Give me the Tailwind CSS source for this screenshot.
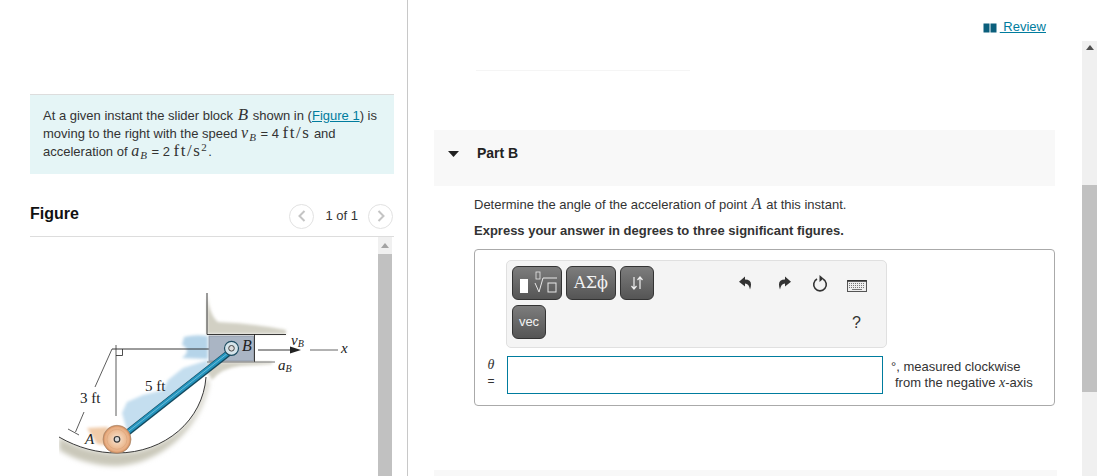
<!doctype html>
<html lang="en">

<head>
  <meta charset="UTF-8" />
  <meta name="viewport" content="width=device-width, initial-scale=1.0" />
  <title>Part B</title>
  <script src="https://cdn.jsdelivr.net/npm/@tailwindcss/browser@4"></script>
</head>

<body class="bg-white text-[#333] font-['Liberation_Sans',Arial,sans-serif] overflow-hidden">
  <div class="flex h-[476px] w-[1098px] overflow-hidden">

    <!-- left column -->
    <div class="w-[408px] shrink-0 border-r border-[#c8c8c8] pl-[30px] pr-[13px] pt-[94px]">
      <div class="h-[80px] bg-[#e5f5f6] border-t border-[#dddddd] pl-[13px] pt-[12px] text-[13px] leading-[18px] whitespace-nowrap">
        At a given instant the slider block <i class="font-['Liberation_Serif',serif] text-[17px] leading-[0] mx-[1px]">B</i> shown in (<a class="text-[#007c9e] underline">Figure 1</a>) is<br>
        moving to the right with the speed <i class="font-['Liberation_Serif',serif] text-[16px] leading-[0] tracking-[1px]">v<sub class="text-[11px]">B</sub></i> = 4 <span class="font-['Liberation_Serif',serif] text-[17px] leading-[0] tracking-[1.5px]">ft/s</span> and<br>
        acceleration of <i class="font-['Liberation_Serif',serif] text-[16px] leading-[0] tracking-[1px]">a<sub class="text-[11px]">B</sub></i> = 2 <span class="font-['Liberation_Serif',serif] text-[17px] leading-[0] tracking-[1.5px]">ft/s<sup class="text-[11px]">2</sup></span>.
      </div>

      <div class="flex items-center justify-between h-[63px] pt-[22px] border-b border-[#dddddd] pr-[1px]">
        <h2 class="text-[16px] font-bold text-[#111] -mt-[5px]">Figure</h2>
        <div class="flex items-center text-[13px]">
          <span class="w-[25px] h-[25px] rounded-full border border-[#e2e2e2] flex items-center justify-center">
            <svg width="8" height="12" viewBox="0 0 8 12"><path d="M6.5 1 L1.5 6 L6.5 11" fill="none" stroke="#c4c4c4" stroke-width="2" /></svg>
          </span>
          <span class="ml-[11px] mr-[10px]">1 of 1</span>
          <span class="w-[25px] h-[25px] rounded-full border border-[#e2e2e2] flex items-center justify-center">
            <svg width="8" height="12" viewBox="0 0 8 12"><path d="M1.5 1 L6.5 6 L1.5 11" fill="none" stroke="#c4c4c4" stroke-width="2" /></svg>
          </span>
        </div>
      </div>

      <div class="flex h-[239px]">
        <!-- figure drawing uses page coordinates shifted by the viewBox -->
        <svg class="w-[347px] h-[239px] shrink-0" viewBox="30 237 347 239">
          <defs>
            <radialGradient id="wheel">
              <stop offset="0" stop-color="#f8e6d6" />
              <stop offset="0.5" stop-color="#efc4a0" />
              <stop offset="0.85" stop-color="#e8ad82" />
              <stop offset="1" stop-color="#cc8656" />
            </radialGradient>
            <filter id="soft"><feGaussianBlur stdDeviation="1.4" /></filter>
            <filter id="softer"><feGaussianBlur stdDeviation="2.6" /></filter>
            <clipPath id="below"><path d="M59 437 C78 448 98 453 117 453 C165 453 203 420 206 377 L230 377 L230 476 L59 476 Z" /></clipPath>
          </defs>

          <!-- ground shading -->
          <g clip-path="url(#below)">
            <path d="M59 437 C78 448 98 453 117 453 C165 453 203 420 206 377 L209 383 C200 430 160 464 117 466 C95 466 75 460 59 450 Z" fill="#c9c7b9" filter="url(#softer)" />
          </g>
          <path d="M207 295 Q210 316 218 322 Q250 323 286 330 L286 334 L207 334 Z" fill="#d2d0c4" filter="url(#soft)" />
          <path d="M207 362 L272 362 L272 364 L240 366 Q222 368 212 380 L207 372 Z" fill="#d2d0c4" filter="url(#soft)" />

          <!-- blue smear -->
          <path d="M184 337 Q195 334 208 336 L208 359 L182 358 Q192 350 182 345 Z" fill="#b5d4e9" filter="url(#soft)" />
          <path d="M122 413 L127 402 L143 395 L163 390 L168 380 L183 368 L208 360 L207 370 L128 434 Z" fill="#c4deef" filter="url(#soft)" />
          <!-- orange smear -->
          <path d="M87 428 L108 427 L106 445 L97 444 Z" fill="#f0cba9" filter="url(#soft)" />

          <!-- guide lines -->
          <path d="M112 349 L220 349" stroke="#222" stroke-width="0.9" />
          <path d="M116 345 L116 416" stroke="#333" stroke-width="0.8" />
          <path d="M116 355.5 L122.5 355.5 L122.5 349" fill="none" stroke="#222" stroke-width="0.8" />
          <path d="M112 349 L95 387 M84 412 L75.5 432 M68 429 L79 435" fill="none" stroke="#333" stroke-width="0.8" />

          <!-- block and slot -->
          <rect x="209" y="336" width="44.5" height="25" fill="#aab5c4" stroke="#8d97a5" stroke-width="0.8" />
          <path d="M207 293 L207 334.5 L286 334.5 M254.5 334 L254.5 362" fill="none" stroke="#222" stroke-width="0.9" />
          <path d="M207 362 L275 362" stroke="#666" stroke-width="0.9" />

          <!-- curved track -->
          <path d="M59 437 C78 448 98 453 117 453 C165 453 203 420 206 377" fill="none" stroke="#222" stroke-width="0.9" />

          <!-- rod -->
          <path d="M122 437 L230 352" stroke="#12495f" stroke-width="6.5" />
          <path d="M122 436.4 L230 351.4" stroke="#2494bd" stroke-width="4.5" />
          <path d="M122 436.4 L230 351.4" stroke="#7fc7df" stroke-width="0.8" />

          <!-- pin B -->
          <circle cx="231.5" cy="348.3" r="7" fill="#d6e4ea" stroke="#1e4c61" stroke-width="1.2" />
          <circle cx="231.5" cy="348.3" r="2.8" fill="#dddddd" stroke="#444" stroke-width="1" />

          <!-- wheel A -->
          <circle cx="117" cy="439.3" r="14" fill="url(#wheel)" stroke="#a88a70" stroke-width="0.7" />
          <circle cx="117" cy="439.3" r="10" fill="none" stroke="#d9a47a" stroke-width="0.6" />
          <circle cx="117" cy="439.3" r="2.8" fill="#d8d8d8" stroke="#333" stroke-width="1.2" />

          <!-- velocity arrow -->
          <path d="M258 350 L292 350" stroke="#222" stroke-width="0.9" />
          <path d="M290 346.5 L301 350 L290 353.5 Z" fill="#222" />
          <path d="M310 350 L338 350" stroke="#555" stroke-width="0.9" />

          <g font-family="'Liberation Serif',serif" fill="#222" font-size="15">
            <text x="242" y="351" font-style="italic" font-size="16">B</text>
            <text x="291" y="345" font-style="italic" font-size="15">v<tspan font-size="10" dy="2">B</tspan></text>
            <text x="341" y="353" font-style="italic">x</text>
            <text x="278" y="370" font-style="italic" font-size="15">a<tspan font-size="10" dy="2">B</tspan></text>
            <text x="80" y="402.5">3 ft</text>
            <text x="145" y="390.5">5 ft</text>
            <text x="85" y="444" font-style="italic">A</text>
          </g>
        </svg>

        <!-- figure scrollbar -->
        <div class="w-[14px] ml-[1px] bg-[#f0f0f0] flex flex-col items-center">
          <div class="h-[17px] flex items-center justify-center">
            <svg width="8" height="5" viewBox="0 0 8 5"><path d="M0 5 L4 0 L8 5 Z" fill="#a3a3a3" /></svg>
          </div>
          <div class="w-full flex-1 bg-[#c1c1c1]"></div>
        </div>
      </div>
    </div>

    <!-- right column -->
    <div class="flex-1 flex flex-col min-w-0">
      <div class="h-[41px] shrink-0 flex justify-end items-start pt-[19px] pr-[52px] text-[13px] text-[#007c9e]">
        <svg class="mt-[4px] mr-[3px]" width="14" height="10" viewBox="0 0 14 10">
          <rect x="0.5" y="0.5" width="6" height="9" fill="#0b5f7c" />
          <rect x="7.5" y="0.5" width="6" height="9" fill="#0b5f7c" />
        </svg>
        <a class="underline leading-[16px]">&nbsp;Review</a>
      </div>

      <div class="flex-1 flex min-h-0">
        <div class="w-[674px] shrink-0 pl-[26px]">
          <div class="h-[1px] w-[214px] ml-[42px] mt-[29px] bg-[#f5f5f5]"></div>

          <div class="w-[621px] h-[56px] mt-[59px] bg-[#f8f8f8] flex items-center pl-[14px] pb-[9px] text-[14px] font-bold text-[#222]">
            <svg width="11" height="6" viewBox="0 0 11 6"><path d="M0 0 L11 0 L5.5 6 Z" fill="#222" /></svg>
            <span class="ml-[18px]">Part B</span>
          </div>

          <div class="ml-[40px] w-[581px]">
            <p class="mt-[10px] text-[13px] leading-[18px] whitespace-nowrap">Determine the angle of the acceleration of point <i class="font-['Liberation_Serif',serif] text-[16px] leading-[0] mx-[1px]">A</i> at this instant.</p>
            <p class="mt-[8px] text-[13px] font-bold leading-[18px]">Express your answer in degrees to three significant figures.</p>

            <div class="mt-[9px] h-[157px] border border-[#aaaaaa] rounded-[4px] pl-[31px] pt-[10px]">
              <div class="w-[381px] h-[88px] bg-[#f4f4f4] border border-[#e0e0e0] rounded-[5px] pl-[5px] pr-[20px] pt-[5px] flex flex-col gap-[5px]">
                <div class="flex items-start">
                  <div class="flex gap-[4px]">
                    <span class="w-[50px] h-[34px] rounded-[6px] border border-[#333] bg-gradient-to-b from-[#7d7d7d] to-[#555555] flex items-center justify-center">
                      <svg width="48" height="32" viewBox="0 0 48 32">
                        <rect x="7" y="12" width="8" height="14" fill="#fff" />
                        <rect x="23" y="5" width="4" height="7" fill="none" stroke="#e8e8e8" stroke-width="0.8" />
                        <path d="M22 16 L26 25 L30 11 L44 11" fill="none" stroke="#e8e8e8" stroke-width="1" />
                        <rect x="35" y="16" width="8" height="9" fill="none" stroke="#e8e8e8" stroke-width="1" />
                      </svg>
                    </span>
                    <span class="w-[50px] h-[34px] rounded-[6px] border border-[#333] bg-gradient-to-b from-[#7d7d7d] to-[#555555] flex items-center justify-center font-['DejaVu_Serif',serif] text-[16px] text-[#f2f2f2] whitespace-nowrap">ΑΣϕ</span>
                    <span class="w-[34px] h-[34px] rounded-[6px] border border-[#333] bg-gradient-to-b from-[#7d7d7d] to-[#555555] flex items-center justify-center">
                      <svg width="14" height="14" viewBox="0 0 14 14">
                        <path d="M4 1 L4 13 M1.5 10 L4 13 L6.5 10 M10 13 L10 1 M7.5 4 L10 1 L12.5 4" fill="none" stroke="#efefef" stroke-width="1.2" />
                      </svg>
                    </span>
                  </div>
                  <div class="flex items-start ml-auto mt-[8px] text-[#3a3a3a]">
                    <svg class="mt-[2px]" width="14" height="14" viewBox="0 0 14 14"><path d="M6 0.5 L0 5.8 L6 10.5 L6 7.5 Q10 7.5 11 13.5 Q14.5 3.5 6 3.5 Z" fill="#333" /></svg>
                    <svg class="ml-[24px] mt-[2px]" width="14" height="14" viewBox="0 0 14 14"><path d="M8 0.5 L14 5.8 L8 10.5 L8 7.5 Q4 7.5 3 13.5 Q-0.5 3.5 8 3.5 Z" fill="#333" /></svg>
                    <svg class="ml-[21px]" width="16" height="18" viewBox="0 0 16 18">
                      <path d="M5 5 A6.3 6.3 0 1 0 11 5" fill="none" stroke="#333" stroke-width="1.6" />
                      <path d="M7.5 1 L7.5 8 L11.5 4.5 Z" fill="#333" />
                    </svg>
                    <svg class="ml-[19px] mr-[-1px] mt-[6px]" width="20" height="12" viewBox="0 0 20 12">
                      <rect x="0.5" y="0.5" width="19" height="11" fill="#eeeeee" stroke="#555" />
                      <path d="M0.5 1 H19.5" stroke="#222" stroke-width="1.4" />
                      <path d="M2 3.5 H18 M2 5.5 H18 M2 7.5 H18" stroke="#777" stroke-width="1" stroke-dasharray="1 1" />
                      <path d="M5 9.5 H15" stroke="#777" stroke-width="1" />
                    </svg>
                  </div>
                </div>
                <div class="flex items-start justify-between">
                  <span class="w-[34px] h-[34px] rounded-[6px] border border-[#333] bg-gradient-to-b from-[#7d7d7d] to-[#555555] flex items-center justify-center text-[13px] text-[#f2f2f2]">vec</span>
                  <span class="mt-[6px] mr-[5px] text-[16px] text-[#333]">?</span>
                </div>
              </div>

              <div class="flex items-start -ml-[31px] mt-[8px]">
                <div class="w-[32px] shrink-0 flex flex-col items-center text-[12px] leading-[16px] pt-[1px]">
                  <i class="font-['Liberation_Serif',serif] text-[14px] leading-[16px]">θ</i>
                  <span>=</span>
                </div>
                <div class="w-[376px] h-[38px] shrink-0 border border-[#007c9e]"></div>
                <div class="ml-[8px] text-[13px] leading-[16px] pt-[3px] whitespace-nowrap">
                  °, measured clockwise<br>
                  <span class="ml-[4px]">from the negative <i class="font-['Liberation_Serif',serif] text-[14px] leading-[0]">x</i>-axis</span>
                </div>
              </div>
            </div>
          </div>

          <div class="w-[623px] h-[6px] mt-[64px] bg-[#f8f8f8]"></div>
        </div>

        <!-- page scrollbar -->
        <div class="w-[15px] ml-auto bg-[#f0f0f0] flex flex-col items-center">
          <div class="h-[13px] flex items-center justify-center">
            <svg width="8" height="5" viewBox="0 0 8 5"><path d="M0 5 L4 0 L8 5 Z" fill="#505050" /></svg>
          </div>
          <div class="w-full h-[207px] mt-[131px] bg-[#c1c1c1]"></div>
        </div>
        <div class="w-[1px]"></div>
      </div>
    </div>
  </div>
</body>

</html>
